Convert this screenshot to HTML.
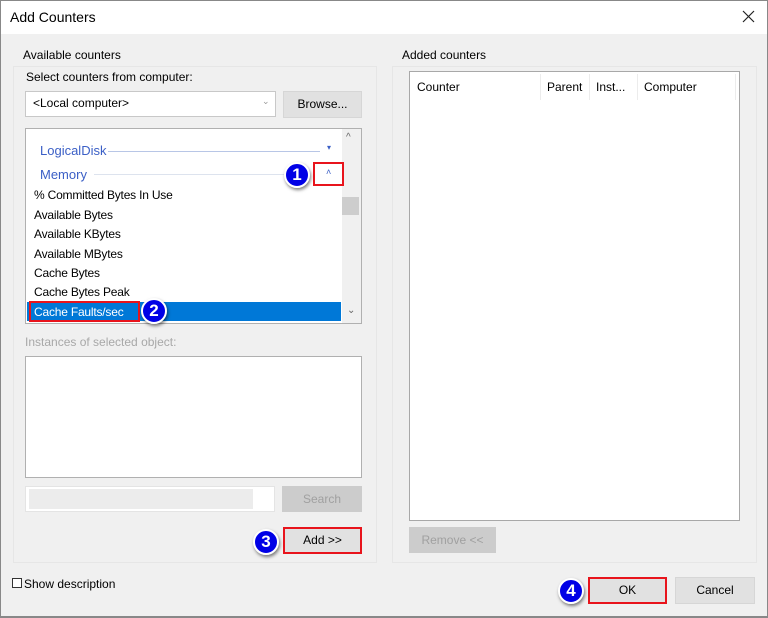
<!DOCTYPE html>
<html><head><style>
*{box-sizing:border-box;margin:0;padding:0}
body{width:768px;height:618px;background:#f0f0f0;font-family:"Liberation Sans",sans-serif;font-size:12px;color:#000;position:relative;overflow:hidden}
.a{position:absolute}
.t{white-space:nowrap}
.btn{position:absolute;background:#e1e1e1;border:1px solid #d6d6d6;text-align:center}
.badge{position:absolute;width:26px;height:26px;border-radius:50%;background:#0000e6;border:2px solid #fff;box-shadow:1px 2px 3px rgba(0,0,0,.5);color:#fff;font-weight:bold;font-size:17px;text-align:center;line-height:22px}
.red{position:absolute;border:2px solid #e8141c}
.row{position:absolute;left:34px;font-size:12px;letter-spacing:-0.2px}
.hs{position:absolute;top:74px;width:1px;height:26px;background:#ececec}
</style></head><body>
<div class="a" style="left:0;top:0;width:768px;height:34px;background:#fff;border-top:1px solid #888;border-left:1px solid #888;border-right:1px solid #888"></div>
<div class="a t" style="left:10px;top:9px;font-size:14px">Add Counters</div>
<svg class="a" style="left:742px;top:10px" width="13" height="13" viewBox="0 0 13 13"><path d="M1 1L12 12M12 1L1 12" stroke="#222" stroke-width="1.2" fill="none"/></svg>
<div class="a" style="left:0;top:34px;width:1px;height:584px;background:#888"></div>
<div class="a" style="left:767px;top:34px;width:1px;height:584px;background:#888"></div>
<div class="a" style="left:0;top:616px;width:768px;height:2px;background:#888"></div>

<div class="a" style="left:13px;top:66px;width:364px;height:497px;border:1px solid #e6e6e6"></div>
<div class="a" style="left:392px;top:66px;width:365px;height:497px;border:1px solid #e6e6e6"></div>
<div class="a t" style="left:22px;top:48px;background:#f0f0f0;padding:0 1px">Available counters</div>
<div class="a t" style="left:401px;top:48px;background:#f0f0f0;padding:0 1px">Added counters</div>

<div class="a t" style="left:26px;top:70px">Select counters from computer:</div>
<div class="a" style="left:25px;top:91px;width:251px;height:26px;background:#fff;border:1px solid #c8c8c8"></div>
<div class="a t" style="left:33px;top:96px">&lt;Local computer&gt;</div>
<div class="a t" style="left:262px;top:96px;font-size:9px;color:#999">⌄</div>
<div class="btn" style="left:283px;top:91px;width:79px;height:27px;line-height:25px">Browse...</div>

<div class="a" style="left:25px;top:128px;width:337px;height:196px;background:#fff;border:1px solid #b0b0b0"></div>
<div class="a" style="left:342px;top:129px;width:19px;height:194px;background:#f0f0f0"></div>
<div class="a" style="left:342px;top:197px;width:17px;height:18px;background:#cdcdcd"></div>
<div class="a t" style="left:346px;top:132px;font-size:10px;color:#666">^</div>
<div class="a t" style="left:347px;top:305px;font-size:10px;color:#666">⌄</div>
<div class="a t" style="left:40px;top:143px;font-size:13px;color:#3b5fc6">LogicalDisk</div>
<div class="a" style="left:108px;top:151px;width:212px;height:1px;background:#b8c6e6"></div>
<div class="a t" style="left:327px;top:143px;font-size:8px;color:#3b5fc6">▾</div>
<div class="a t" style="left:40px;top:167px;font-size:13px;color:#3b5fc6">Memory</div>
<div class="a" style="left:94px;top:174px;width:196px;height:1px;background:#dde3ee"></div>
<div class="a t" style="left:326px;top:167px;font-size:9px;color:#3b5fc6">˄</div>
<div class="red" style="left:313px;top:162px;width:31px;height:24px"></div>
<div class="badge" style="left:284px;top:162px">1</div>

<div class="row t" style="top:188px">% Committed Bytes In Use</div>
<div class="row t" style="top:208px">Available Bytes</div>
<div class="row t" style="top:227px">Available KBytes</div>
<div class="row t" style="top:247px">Available MBytes</div>
<div class="row t" style="top:266px">Cache Bytes</div>
<div class="row t" style="top:285px">Cache Bytes Peak</div>
<div class="a" style="left:27px;top:302px;width:314px;height:19px;background:#0078d7"></div>
<div class="row t" style="top:305px;color:#fff">Cache Faults/sec</div>
<div class="red" style="left:29px;top:301px;width:111px;height:21px"></div>
<div class="badge" style="left:141px;top:298px">2</div>

<div class="a t" style="left:25px;top:335px;color:#a8a8a8">Instances of selected object:</div>
<div class="a" style="left:25px;top:356px;width:337px;height:122px;background:#fff;border:1px solid #b0b0b0"></div>
<div class="a" style="left:25px;top:486px;width:250px;height:26px;background:#fff;border:1px solid #e4e4e4"></div>
<div class="a" style="left:29px;top:489px;width:224px;height:20px;background:#ececec"></div>
<div class="btn" style="left:282px;top:486px;width:80px;height:26px;line-height:24px;color:#a0a0a0;background:#ccc;border-color:#ccc">Search</div>
<div class="btn" style="left:283px;top:527px;width:79px;height:27px;line-height:23px;border:2px solid #e8141c">Add &gt;&gt;</div>
<div class="badge" style="left:253px;top:529px">3</div>

<div class="a" style="left:409px;top:71px;width:331px;height:450px;background:#fff;border:1px solid #a8a8a8"></div>
<div class="a t" style="left:417px;top:80px">Counter</div>
<div class="a t" style="left:547px;top:80px">Parent</div>
<div class="a t" style="left:596px;top:80px">Inst...</div>
<div class="a t" style="left:644px;top:80px">Computer</div>
<div class="hs" style="left:540px"></div><div class="hs" style="left:589px"></div><div class="hs" style="left:637px"></div><div class="hs" style="left:735px"></div>
<div class="btn" style="left:409px;top:527px;width:87px;height:26px;line-height:24px;color:#a0a0a0;background:#ccc;border-color:#ccc">Remove &lt;&lt;</div>

<div class="a" style="left:12px;top:578px;width:10px;height:10px;border:1px solid #333;background:#fff"></div>
<div class="a t" style="left:24px;top:577px">Show description</div>
<div class="btn" style="left:588px;top:577px;width:79px;height:27px;line-height:23px;border:2px solid #e8141c">OK</div>
<div class="btn" style="left:675px;top:577px;width:80px;height:27px;line-height:25px">Cancel</div>
<div class="badge" style="left:558px;top:578px">4</div>
</body></html>
